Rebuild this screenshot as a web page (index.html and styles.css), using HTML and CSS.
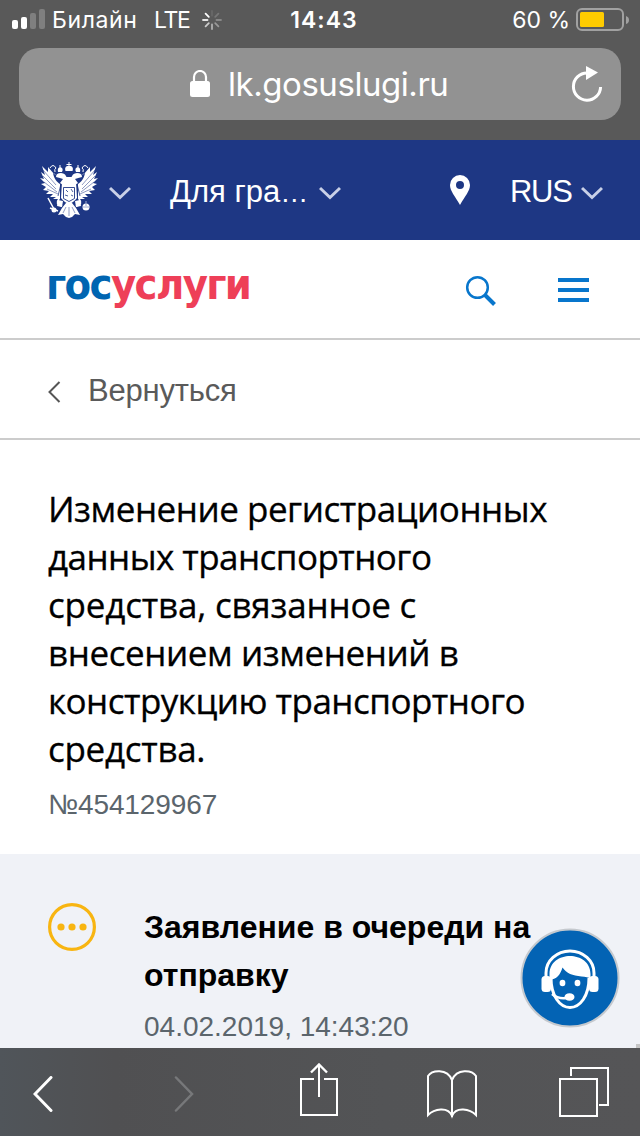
FILE: index.html
```html
<!DOCTYPE html>
<html lang="ru">
<head>
    <meta charset="UTF-8">
    <meta name="viewport" content="width=device-width, initial-scale=1.0">
    <title>Госуслуги</title>
    <link rel="stylesheet" href="styles.css">
</head>
<body>

    <div class="browser-top">
        <div class="status-bar">
            <div class="status-left">
                <svg class="signal" width="34" height="22" viewBox="0 0 34 22">
                    <rect x="0" y="11" width="6" height="9" rx="2" fill="#fff"/>
                    <rect x="9" y="8" width="6" height="12" rx="2" fill="#fff"/>
                    <rect x="18" y="4" width="6" height="16" rx="2" fill="#7f7f7f"/>
                    <rect x="27" y="0" width="6" height="20" rx="2" fill="#7f7f7f"/>
                </svg>
                <span class="carrier">Билайн</span>
                <span class="network">LTE</span>
                <svg class="spinner" width="20" height="20" viewBox="-10 -10 20 20" stroke-width="1.8" stroke-linecap="round">
                    <path d="M0-4.5V-9" stroke="#686868"/>
                    <path d="M3.2-3.2L6.4-6.4" stroke="#777"/>
                    <path d="M4.5 0H9" stroke="#888"/>
                    <path d="M3.2 3.2L6.4 6.4" stroke="#999"/>
                    <path d="M0 4.5V9" stroke="#b0b0b0"/>
                    <path d="M-3.2 3.2L-6.4 6.4" stroke="#ccc"/>
                    <path d="M-4.5 0H-9" stroke="#e5e5e5"/>
                    <path d="M-3.2-3.2L-6.4-6.4" stroke="#fff"/>
                </svg>
            </div>
            <div class="clock">14:43</div>
            <div class="status-right">
                <span class="percent">60 %</span>
                <svg class="battery" width="54" height="24" viewBox="0 0 54 24">
                    <rect x="1" y="1" width="46" height="21" rx="5" fill="none" stroke="#a1a1a1" stroke-width="2"/>
                    <rect x="4" y="4" width="24" height="15" rx="1.5" fill="#fc0"/>
                    <path d="M50 8q3 1 3 4t-3 4z" fill="#a1a1a1"/>
                </svg>
            </div>
        </div>
        <div class="address-bar">
            <svg class="lock" width="20" height="28" viewBox="0 0 20 28">
                <path d="M4 13V7a6 6 0 0 1 12 0v6" fill="none" stroke="#fff" stroke-width="2.2"/>
                <rect x="0" y="11" width="20" height="16" rx="2.5" fill="#fff"/>
            </svg>
            <span class="url">lk.gosuslugi.ru</span>
            <svg class="reload" width="32" height="36" viewBox="0 0 32 36">
                <path d="M16 7A13.6 13.6 0 1 0 29.6 21" fill="none" stroke="#fff" stroke-width="3"/>
                <path d="M15 0l12 6.500-12 7.500z" fill="#fff"/>
            </svg>
        </div>
    </div>

    <div class="gov-bar">
        <svg class="eagle" width="58" height="56" viewBox="0 0 58 56" fill="#fff">
            <!-- left wing, mirrored for the right one -->
            <g id="wing">
                <path d="M17 13L13 11C14 17 17 20 20 22L20 37 13 37 16 35 10 35 13 32 6 32 9 29 3 28 6 25 1 22 5 21 0 16 4 17 1 10 5 13 2 4 8 10 8 5 14 12Z"/>
                <path d="M3 8L16 23M3 14L16 27M4 20L17 30M7 27L18 32" fill="none" stroke="#1e3784" stroke-width=".5"/>
                <path d="M10 6q3-5 6 0q-2 1-1 4" fill="none" stroke="#fff" stroke-width="1"/>
                <path d="M16 15q0-4 5-4q5 0 6 6l-1 8-6-4 3-4q-3-1-7-2z"/>
                <path d="M18 10q-1-4 2-5q4 1 2 5zM19.500 3h1v6h-1z"/>
                <path d="M18 38l5 1-1 6-5-1z"/>
            </g>
            <use href="#wing" transform="matrix(-1 0 0 1 58 0)"/>
            <path d="M28.500 0h1v2h2v1h-2v1c3 0 4 2 3 5h-7c-1-3 0-5 3-5V3h-2V2h2z"/>
            <path d="M24 15h10l-1 5h3l1 16q-4 5-8 6q-4-1-8-6l1-16h3z"/>
            <path d="M23.500 25.500h11v11l-5.500 3-5.500-3z" fill="none" stroke="#1e3784" stroke-width=".9"/>
            <path d="M26 28l2 2M31 27l2 3M25 33l3 1M31 33l2 1M21 22l-3 12M37 22l3 12" stroke="#1e3784" stroke-width=".8"/>
            <path d="M26 41h6l4 5 4 7-5-1-3 3-3 1-3-1-3-3-5 1 4-7z"/>
            <path d="M26 45l-3 6M32 45l3 6M29 45v9" stroke="#1e3784" stroke-width=".5"/>
            <path d="M8 36l7 13M10 46l8 3" stroke="#fff" stroke-width="1.500"/>
            <circle cx="14" cy="48" r="2.500"/>
            <circle cx="46" cy="45" r="3.500"/>
            <path d="M43 45h7M46 39v5" stroke="#9eaad0" stroke-width="1"/>
            <path d="M19 37q-4 5 3 7M39 37q4 5-3 7" fill="none" stroke="#fff" stroke-width="2"/>
        </svg>
        <svg class="chevron chevron-eagle" width="22" height="14" viewBox="0 0 22 14"><path d="M1 2l10 9.500L21 2"/></svg>
        <span class="audience">Для гра<span class="dots">…</span></span>
        <svg class="chevron chevron-audience" width="22" height="14" viewBox="0 0 22 14"><path d="M1 2l10 9.500L21 2"/></svg>
        <svg class="pin" width="20" height="30" viewBox="0 0 20 30">
            <path d="M10 0a10 10 0 0 1 10 10c0 6-5 11-10 20C5 21 0 16 0 10A10 10 0 0 1 10 0zm0 6a4 4 0 1 0 0 8 4 4 0 0 0 0-8z" fill="#fff"/>
        </svg>
        <span class="lang">RUS</span>
        <svg class="chevron" width="22" height="14" viewBox="0 0 22 14"><path d="M1 2l10 9.500L21 2"/></svg>
    </div>

    <div class="site-header">
        <div class="logo"><span class="logo-blue">гос</span><span class="logo-red">услуги</span></div>
        <svg class="search" width="32" height="32" viewBox="0 0 32 32" fill="none" stroke="#0876cc">
            <circle cx="12.500" cy="12.500" r="10.300" stroke-width="2.500"/>
            <path d="M20 20l9.500 9.500" stroke-width="4"/>
        </svg>
        <div class="menu"><i></i><i></i><i></i></div>
    </div>

    <div class="back-row">
        <svg class="back-arrow" width="13" height="22" viewBox="0 0 13 22"><path d="M11.500 1L1.500 11l10 10" fill="none" stroke="#555" stroke-width="2"/></svg>
        <span class="back-text">Вернуться</span>
    </div>

    <div class="order">
        <h1>
            <span class="line line-1">Изменение регистрационных</span>
            <span class="line line-2">данных транспортного</span>
            <span class="line line-3">средства, связанное с</span>
            <span class="line line-4">внесением изменений в</span>
            <span class="line line-5">конструкцию транспортного</span>
            <span class="line line-6">средства.</span>
        </h1>
        <div class="order-number">№454129967</div>
    </div>

    <div class="status">
        <svg class="status-icon" width="48" height="48" viewBox="0 0 48 48" fill="#f8b511">
            <circle cx="24" cy="24" r="22.400" fill="none" stroke="#f8b511" stroke-width="3.200"/>
            <circle cx="13" cy="24" r="3.600"/>
            <circle cx="24" cy="24" r="3.600"/>
            <circle cx="35" cy="24" r="3.600"/>
        </svg>
        <div class="status-text">
            <h2>Заявление в очереди на<br>отправку</h2>
            <div class="date">04.02.2019, 14:43:20</div>
        </div>
        <div class="support">
            <svg width="100" height="100" viewBox="0 0 100 100">
                <circle cx="50" cy="50" r="48.500" fill="#0363b4" stroke="#c5c9ce" stroke-width="2"/>
                <path d="M26 49V45a24 22 0 0 1 48 0v4" fill="none" stroke="#fff" stroke-width="3"/>
                <path d="M29.500 52V46c0-24 41-24 41 0v5c-2-2-5-2-9-2.500c-9-1-15-3-19-9c-2 7-6 12-13 12.500z" fill="#fff"/>
                <path d="M31 50c0 18 9 29.500 19 29.500S69 68 69 50" fill="none" stroke="#fff" stroke-width="3"/>
                <rect x="21.500" y="48" width="9.500" height="16" rx="3.500" fill="#fff"/>
                <rect x="69" y="48" width="9.500" height="16" rx="3.500" fill="#fff"/>
                <ellipse cx="42.500" cy="55" rx="2.900" ry="3.200" fill="#fff"/>
                <ellipse cx="57.500" cy="55" rx="2.900" ry="3.200" fill="#fff"/>
                <path d="M32 66q6 5 14 4" fill="none" stroke="#fff" stroke-width="2.500"/>
                <ellipse cx="49.500" cy="69" rx="5" ry="3.800" fill="#fff"/>
            </svg>
        </div>
        <div class="corner"></div>
    </div>

    <div class="toolbar">
        <svg class="prev" width="20" height="36" viewBox="0 0 20 36"><path d="M18 1.500L2 18l16 16.500" fill="none" stroke="#fff" stroke-width="3" stroke-linecap="round"/></svg>
        <svg class="next" width="20" height="36" viewBox="0 0 20 36"><path d="M2 1.500L18 18 2 34.500" fill="none" stroke="#77787a" stroke-width="2.500" stroke-linecap="round"/></svg>
        <svg class="share" width="38" height="54" viewBox="0 0 38 54" fill="none" stroke="#fff" stroke-width="2">
            <path d="M14 16H1v36h36V16H24M19 34V2"/>
            <path d="M11 9.500L19 1.500l8 8" stroke-width="2.400"/>
        </svg>
        <svg class="book" width="52" height="50" viewBox="0 0 52 50" fill="none" stroke="#fff" stroke-width="2">
            <path d="M26 11C21-1 6 1 2 7v39c6-6 20-9 24 1 4-10 18-7 24-1V7C46 1 31-1 26 11zV48"/>
        </svg>
        <svg class="tabs" width="50" height="50" viewBox="0 0 50 50" fill="none" stroke="#fff" stroke-width="2">
            <path d="M1 12h37v37H1zM12 9V1h37v37h-9"/>
        </svg>
    </div>

</body>
</html>
```
FILE: styles.css
```css
body {
    font-family: "Liberation Sans", Arial, sans-serif;
    margin: 0;
    width: 640px;
    height: 1136px;
    overflow: hidden;
    display: flex;
    flex-direction: column;
    background-color: #fff;
}

svg {
    display: block;
    flex-shrink: 0;
}

span, h1, h2 {
    white-space: nowrap;
}

.browser-top {
    box-sizing: border-box;
    height: 140px;
    background-color: #595959;
    color: #fff;
}

.status-bar {
    display: grid;
    grid-template-columns: 240px 160px 240px;
    height: 40px;
    align-items: center;
    font-family: Inter, sans-serif;
    font-size: 23px;
}

.status-left {
    display: flex;
    align-items: center;
    padding-left: 12px;
}

.carrier {
    width: 86px;
    margin-left: 6px;
    letter-spacing: 0.6px;
}

.network {
    width: 35px;
    margin-left: 16px;
    letter-spacing: -1.3px;
}

.spinner {
    margin-left: 13px;
}

.clock {
    text-align: center;
    font-weight: 600;
    padding-left: 8px;
    letter-spacing: 1px;
}

.status-right {
    display: flex;
    align-items: center;
    justify-content: flex-end;
    padding-right: 10px;
}

.battery {
    margin-left: 6px;
}

.address-bar {
    display: flex;
    align-items: center;
    height: 72px;
    margin: 8px 19px 0;
    border-radius: 20px;
    background-color: #929292;
}

.lock {
    margin-left: 171px;
}

.url {
    width: 343px;
    margin-left: 18px;
    font-family: Inter, sans-serif;
    font-size: 33px;
    letter-spacing: -0.45px;
}

.gov-bar {
    display: flex;
    align-items: center;
    box-sizing: border-box;
    height: 100px;
    padding: 0 37px 0 40px;
    background-color: #1e3784;
    color: #fff;
    font-size: 31px;
}

.chevron {
    fill: none;
    stroke: #c9d0e7;
    stroke-width: 3;
    margin-top: 6px;
}

.chevron-eagle {
    margin-left: 11px;
}

.audience {
    width: 138px;
    margin-left: 39px;
    margin-top: 4px;
}

.dots {
    font-size: 28px;
}

.chevron-audience {
    margin-left: 11px;
}

.pin {
    margin-left: 109px;
}

.lang {
    width: 62px;
    margin-left: 40px;
    margin-right: auto;
    margin-top: 4px;
    letter-spacing: -1.3px;
}

.site-header {
    display: flex;
    align-items: center;
    height: 98px;
    padding: 0 51px 0 46px;
    border-bottom: 2px solid #ccc;
}

.logo {
    width: 204px;
    margin-top: -10px;
    font-family: "DejaVu Sans Condensed", "DejaVu Sans", sans-serif;
    font-stretch: condensed;
    font-size: 43px;
    font-weight: 700;
    letter-spacing: -1.6px;
}

.logo-blue {
    color: #0065b1;
}

.logo-red {
    color: #ee3f58;
}

.search {
    margin-left: 215px;
    margin-top: 4px;
}

.menu {
    display: flex;
    flex-direction: column;
    gap: 6px;
    margin-left: auto;
    margin-top: 2px;
}

.menu i {
    width: 31px;
    height: 4px;
    background-color: #0876cc;
}

.back-row {
    display: flex;
    align-items: center;
    height: 98px;
    padding-left: 48px;
    border-bottom: 2px solid #ccc;
    color: #5a5a5a;
    font-size: 31px;
}

.back-arrow {
    margin-top: 6px;
    margin-right: 27px;
}

.back-text {
    margin-top: 3px;
    letter-spacing: -0.2px;
}

.order {
    box-sizing: border-box;
    height: 414px;
    padding: 45px 48px 0;
}

h1 {
    margin: 0;
    font-family: "Open Sans", "Noto Sans", sans-serif;
    font-size: 35px;
    font-weight: 400;
    line-height: 48px;
    color: #000;
    -webkit-text-stroke: 0.3px #000;
}

.line {
    display: block;
}

.line-1 {
    letter-spacing: -0.48px;
}

.line-2 {
    letter-spacing: -0.55px;
}

.line-3 {
    letter-spacing: -0.2px;
}

.line-4 {
    letter-spacing: -0.42px;
}

.line-5 {
    letter-spacing: -0.52px;
}

.line-6 {
    letter-spacing: -0.3px;
}

.order-number {
    margin-top: 16px;
    font-size: 28px;
    line-height: 32px;
    letter-spacing: -0.1px;
    color: #5b656c;
}

.status {
    position: relative;
    display: flex;
    box-sizing: border-box;
    height: 194px;
    padding: 49px 0 0 48px;
    background-color: #f0f2f7;
}

.status-text {
    margin-left: 48px;
}

h2 {
    margin: 0;
    font-size: 32px;
    line-height: 48px;
    color: #000;
}

.date {
    margin-top: 12px;
    font-size: 28px;
    line-height: 32px;
    color: #5b656c;
}

.support {
    position: absolute;
    left: 520px;
    top: 74px;
}

.corner {
    position: absolute;
    right: 0;
    bottom: 0;
    width: 4px;
    height: 4px;
    background-color: #c6c6c6;
}

.toolbar {
    display: flex;
    align-items: center;
    box-sizing: border-box;
    height: 88px;
    padding: 4px 0 0 33px;
    background: linear-gradient(90deg, #50555a, #505052 18%, #535456 60%, #555557);
}

.next {
    margin-left: 121px;
}

.share {
    margin-top: -8px;
    margin-left: 106px;
}

.book {
    margin-left: 88px;
}

.tabs {
    margin-top: -4px;
    margin-left: 81px;
}
```
